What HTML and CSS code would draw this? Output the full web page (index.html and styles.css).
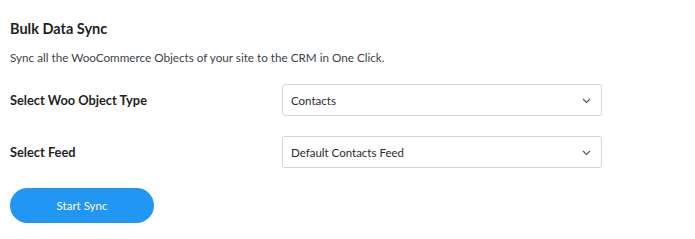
FILE: index.html
```html
<!DOCTYPE html>
<html>
<head>
<meta charset="utf-8">
<link rel="stylesheet" href="styles.css">
</head>
<body>
<div class="panel">
  <h2 class="title">Bulk Data Sync</h2>
  <p class="desc">Sync all the WooCommerce Objects of your site to the CRM in One Click.</p>
  <div class="row">
    <label class="label">Select Woo Object Type</label>
    <div class="select"><span>Contacts</span>
      <svg class="chev" width="9" height="6" viewBox="0 0 9 6"><path d="M1 1l3.5 3.5 3.5-3.5" fill="none" stroke="#555" stroke-width="1.2"/></svg>
    </div>
  </div>
  <div class="row">
    <label class="label">Select Feed</label>
    <div class="select"><span>Default Contacts Feed</span>
      <svg class="chev" width="9" height="6" viewBox="0 0 9 6"><path d="M1 1l3.5 3.5 3.5-3.5" fill="none" stroke="#555" stroke-width="1.2"/></svg>
    </div>
  </div>
  <button class="btn">Start Sync</button>
</div>
</body>
</html>
```
FILE: styles.css
```css
body { margin: 0; background: #fff; font-family: Lato, "Noto Sans", sans-serif; color: #222; }
.panel { padding: 20px 10px 0 10px; }
.title { margin: 0; font-size: 14.5px; font-weight: 700; line-height: 18px; color: #1f1f1f; }
.desc { margin: 12px 0 0 0; font-size: 11.7px; line-height: 14px; color: #3c434a; }
.row { display: flex; align-items: center; height: 32px; margin-top: 20px; }
.label { width: 272px; font-size: 12.8px; font-weight: 700; color: #1f1f1f; }
.select { width: 300px; height: 30px; border: 1px solid #d4d4d4; border-radius: 3px; display: flex; align-items: center; justify-content: space-between; padding: 0 10px 0 8px; box-sizing: content-box; font-size: 11.5px; color: #2c2c2c; }
.chev { margin-top: 2px; }
.btn { margin-top: 20px; width: 144px; height: 35px; border: 0; border-radius: 18px; background: #2196f3; color: #fff; font-family: inherit; font-size: 11.5px; }
```
